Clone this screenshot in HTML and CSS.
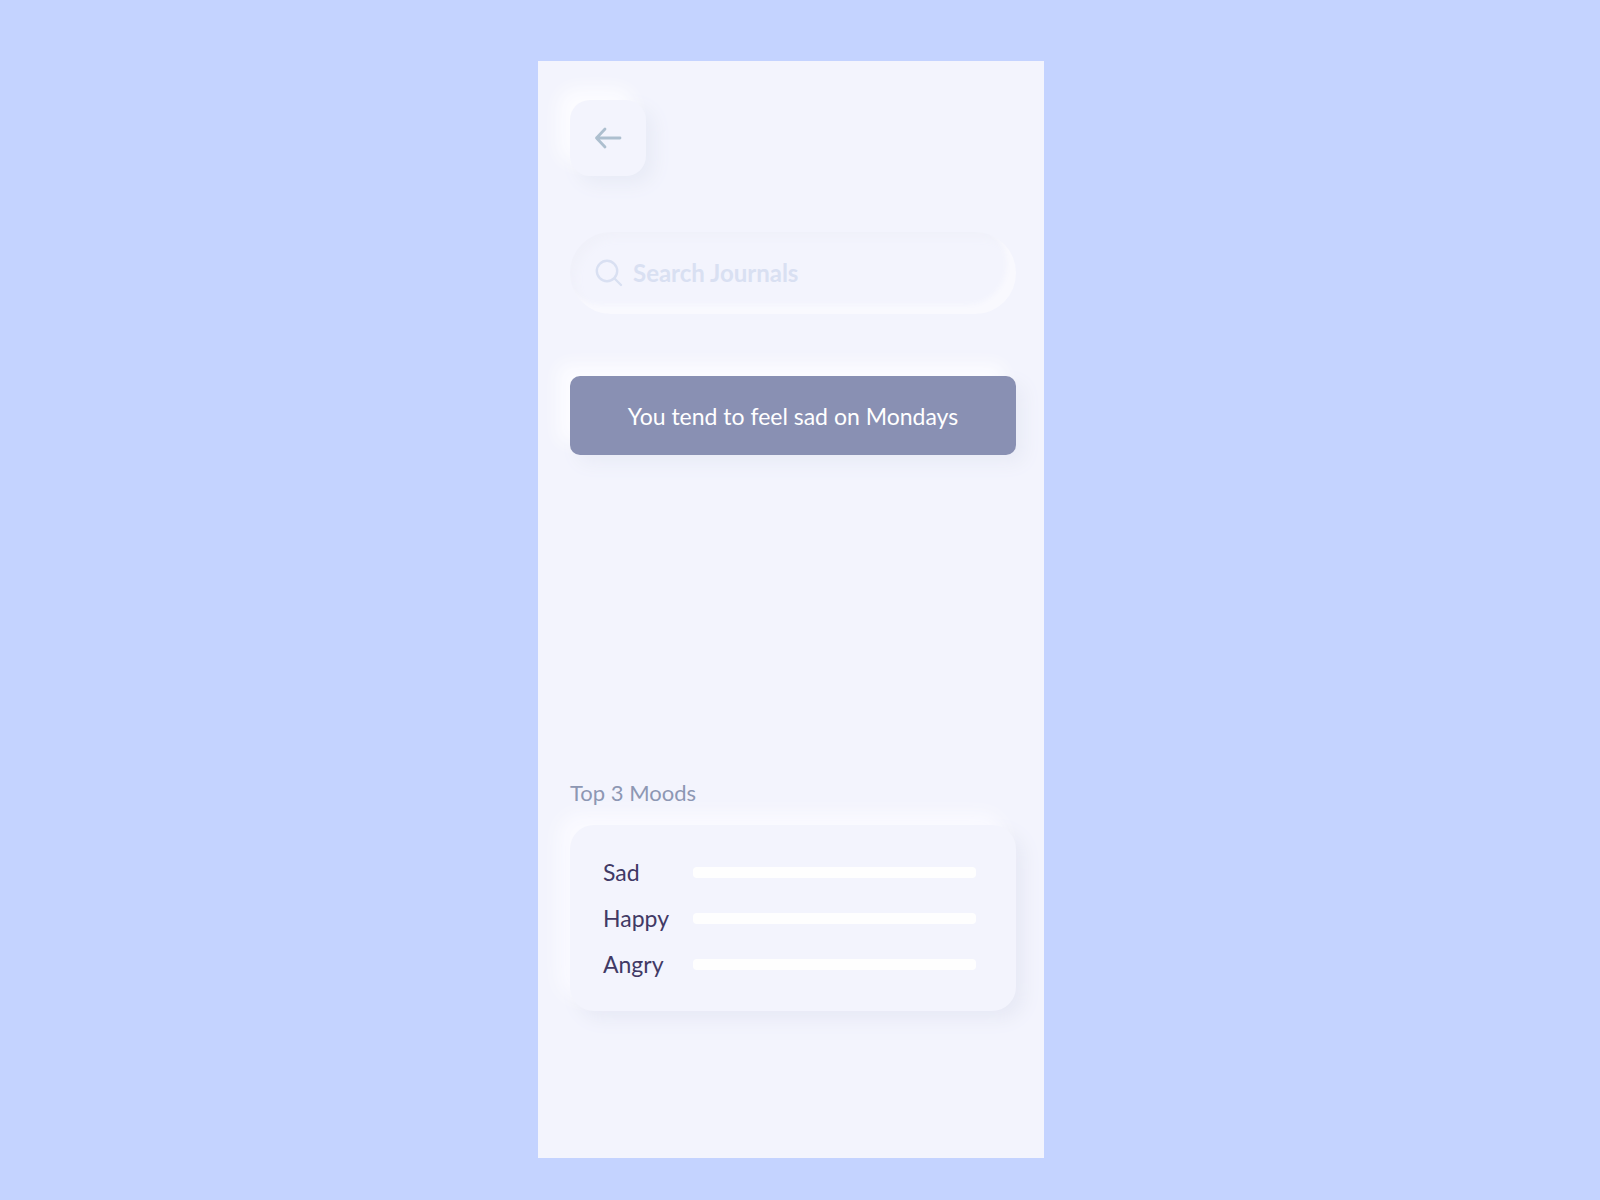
FILE: index.html
```html
<!DOCTYPE html>
<html lang="en">
  <head>
    <meta charset="UTF-8">
    <meta name="viewport" content="width=device-width, initial-scale=1.0">
    <title>Mood Journal</title>
    <link rel="stylesheet" href="styles.css">
  </head>
  <body>
    <main class="phone">
      <button class="back-btn" type="button" aria-label="Back">
        <svg width="28" height="22" viewBox="0 0 28 22" fill="none" stroke="currentColor" stroke-width="2.8" stroke-linecap="round" stroke-linejoin="round">
          <path d="M26 11H2.5M11 2L2.5 11l8.500 9"/>
        </svg>
      </button>
      <form class="search-box" role="search">
        <label for="search" aria-label="Search Journals">
          <svg width="28" height="28" viewBox="0 0 28 28" fill="none" stroke="currentColor" stroke-width="2.4" stroke-linecap="round">
            <circle cx="12" cy="12" r="10.2"/>
            <path d="M19.500 19.500l6.500 6.500"/>
          </svg>
        </label>
        <input id="search" type="search" placeholder="Search Journals">
      </form>
      <p class="insight">You tend to feel sad on Mondays</p>
      <div class="chart"></div>
      <section class="moods">
        <h2>Top 3 Moods</h2>
        <div class="mood-card">
          <div class="mood-item">
            <label for="sad">Sad</label>
            <progress id="sad" value="0" max="100"></progress>
          </div>
          <div class="mood-item">
            <label for="happy">Happy</label>
            <progress id="happy" value="0" max="100"></progress>
          </div>
          <div class="mood-item">
            <label for="angry">Angry</label>
            <progress id="angry" value="0" max="100"></progress>
          </div>
        </div>
      </section>
    </main>
  </body>
</html>
```
FILE: styles.css
```css
* {
  box-sizing: border-box;
}
body {
  margin: 0;
  min-height: 100vh;
  display: flex;
  justify-content: center;
  padding: 61px 18px 42px 0;
  background: #c4d3ff;
  font-family: Lato, "Liberation Sans", sans-serif;
  font-size: 23px;
  line-height: 28px;
}
.phone {
  width: 100%;
  max-width: 506px;
  padding: 39px 28px 39px 32px;
  overflow: hidden;
  background: #f3f4fd;
}
.back-btn {
  display: flex;
  align-items: center;
  justify-content: center;
  width: 76px;
  height: 76px;
  padding: 0;
  border: 0;
  border-radius: 20px;
  color: #adbfcf;
  background: #f3f4fd;
  box-shadow: -12px -12px 16px #fcfcff, 8px 8px 18px #e8ebf6;
}
.search-box {
  display: flex;
  align-items: center;
  gap: 10px;
  height: 82px;
  margin-top: 56px;
  padding: 0 25px;
  border-radius: 41px;
  color: #d9e0f2;
  box-shadow: inset -9px -9px 5px #f9f9fe, inset 6px 6px 8px #f0f1fa;
}
.search-box label {
  display: flex;
}
.search-box input {
  flex: 1;
  min-width: 0;
  padding: 0;
  border: 0;
  outline: none;
  background: none;
  color: #8990b3;
  font: inherit;
  font-size: 24px;
  font-weight: bold;
}
.search-box input::placeholder {
  color: #d9e0f2;
}
.insight {
  margin: 62px 0 0;
  padding: 26px 16px 25px;
  border-radius: 10px;
  color: #fff;
  background: #8990b3;
  text-align: center;
  box-shadow: -12px -12px 16px #fcfcff, 8px 8px 18px #e9ebf6;
}
.chart {
  height: 324px;
}
.moods h2 {
  margin: 0;
  color: #8d97b3;
  font-size: 22px;
  font-weight: normal;
}
.mood-card {
  display: flex;
  flex-direction: column;
  gap: 18px;
  margin-top: 18px;
  padding: 33px 40px 33px 33px;
  border-radius: 24px;
  background: #f3f4fd;
  box-shadow: -12px -12px 16px #fafaff, 8px 8px 18px #e7e9f5;
}
.mood-item {
  display: flex;
  align-items: center;
  color: #413965;
}
.mood-item label {
  flex: 0 0 90px;
}
.mood-item progress {
  flex: 1;
  min-width: 0;
  height: 11px;
  border: 0;
  border-radius: 4px;
  overflow: hidden;
  appearance: none;
  -webkit-appearance: none;
  background: #fefefe;
}
.mood-item progress::-webkit-progress-bar {
  background: #fefefe;
}
```
